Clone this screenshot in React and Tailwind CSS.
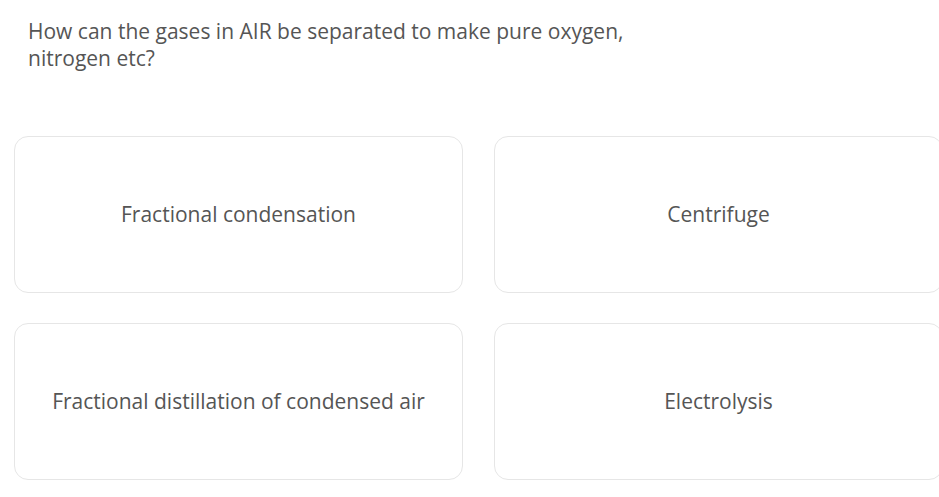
const question = "How can the gases in AIR be separated to make pure oxygen, nitrogen etc?";

const answers = [
  "Fractional condensation",
  "Centrifuge",
  "Fractional distillation of condensed air",
  "Electrolysis",
];

export default function App() {
  return (
    <div
      className="w-[939px] h-[497px] overflow-hidden bg-white text-[#555]"
      style={{ fontFamily: '"Open Sans", sans-serif' }}
    >
      <div className="pl-[28px] pt-[18px] w-[680px]">
        <p className="text-[21px] leading-[27px]">{question}</p>
      </div>

      <div className="grid grid-cols-[449px_449px] gap-x-[31px] gap-y-[30px] ml-[14px] mt-[64px]">
        {answers.map((a) => (
          <div
            key={a}
            className="h-[157px] rounded-[14px] border border-[#e6e6e6] bg-white flex items-center justify-center text-[21px]"
          >
            {a}
          </div>
        ))}
      </div>
    </div>
  );
}
